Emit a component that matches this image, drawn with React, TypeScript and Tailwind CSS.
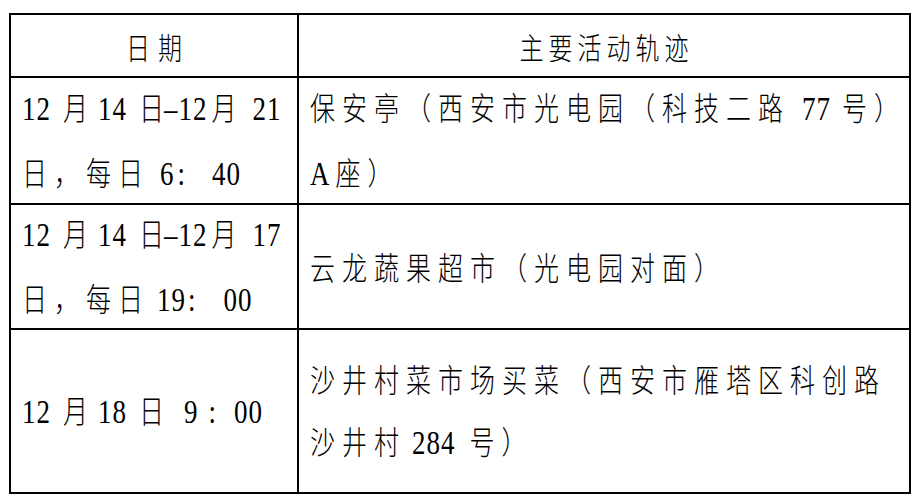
import React from "react";

function N({ children, className = "" }: { children: React.ReactNode; className?: string }) {
  return (
    <span className={"font-['Liberation_Serif',serif] text-[27px] tracking-[1px] " + className}>{children}</span>
  );
}

function Line({ children }: { children: React.ReactNode }) {
  return <div className="origin-center scale-y-[1.25] whitespace-nowrap leading-[63px]">{children}</div>;
}

function BodyCell({ children }: { children: React.ReactNode }) {
  return <div className="flex flex-col justify-center bg-white pl-[11px]">{children}</div>;
}

export default function App() {
  return (
    <div className="min-h-[500px] w-[924px] bg-white pl-[9px] pt-[13px]">
      <div className="grid w-[902px] grid-cols-[286px_610px] grid-rows-[61px_125px_123px_162px] gap-[2px] bg-black p-[2px] font-['Noto_Sans_CJK_SC',sans-serif] text-[25px] font-light tracking-[7px] text-black">
        <div className="flex items-center justify-center bg-white pl-[8px] text-[24px] tracking-[8px]">
          <Line>日期</Line>
        </div>
        <div className="flex items-center justify-center bg-white pl-[5px] text-[24px] tracking-[5px]">
          <Line>主要活动轨迹</Line>
        </div>

        <BodyCell>
          <Line>
            <N className="pr-[12px]">12</N>月<N className="pl-[3px] pr-[12px]">14</N>
            <span className="tracking-normal">日</span>
            <N className="pr-[4px]">–12</N>月<N className="pl-[9px]">21</N>
          </Line>
          <Line>
            日，每日<N className="pl-[10px] pr-[4px] tracking-normal">6</N>
            <N className="tracking-normal">:</N>
            <N className="pl-[27px]">40</N>
          </Line>
        </BodyCell>
        <BodyCell>
          <Line>
            保安亭（西安市光电园（科技二路<N className="pl-[12px] pr-[11px]">77</N>号）
          </Line>
          <Line>
            <N className="pr-[5px] text-[21px]">A</N>座）
          </Line>
        </BodyCell>

        <BodyCell>
          <Line>
            <N className="pr-[12px]">12</N>月<N className="pl-[3px] pr-[12px]">14</N>
            <span className="tracking-normal">日</span>
            <N className="pr-[4px]">–12</N>月<N className="pl-[9px]">17</N>
          </Line>
          <Line>
            日，每日<N className="pl-[7px] pr-[2px]">19</N>
            <N className="tracking-normal">:</N>
            <N className="pl-[28px]">00</N>
          </Line>
        </BodyCell>
        <BodyCell>
          <Line>云龙蔬果超市（光电园对面）</Line>
        </BodyCell>

        <BodyCell>
          <Line>
            <N className="pr-[12px]">12</N>月<N className="pl-[3px] pr-[12px]">18</N>日
            <N className="pl-[13px] pr-[11px] tracking-normal">9</N>
            <N className="tracking-normal">:</N>
            <N className="pl-[18px]">00</N>
          </Line>
        </BodyCell>
        <BodyCell>
          <Line>沙井村菜市场买菜（西安市雁塔区科创路</Line>
          <Line>
            沙井村<N className="pl-[6px] pr-[14px]">284</N>号）
          </Line>
        </BodyCell>
      </div>
    </div>
  );
}
